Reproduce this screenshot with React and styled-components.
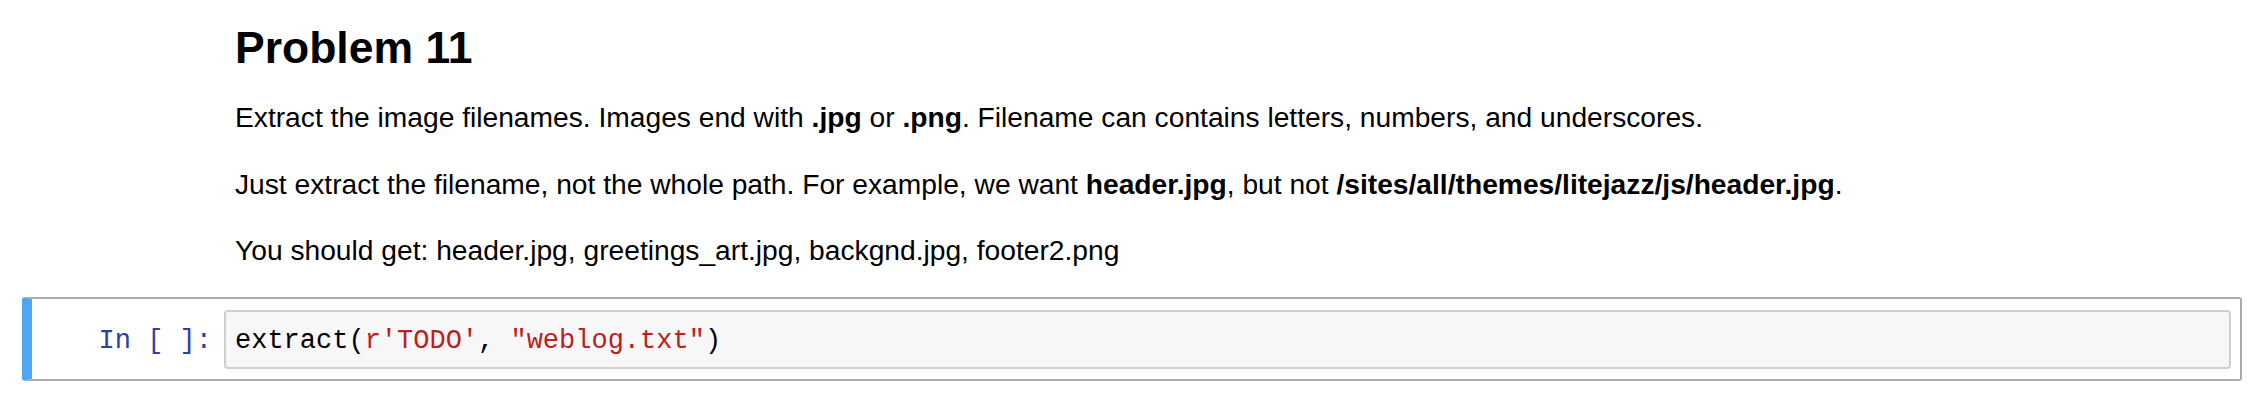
import React from 'react'
import styled, { createGlobalStyle } from 'styled-components';

const GlobalStyle = createGlobalStyle`
body {
    margin: 0;
    background: #fff;
    font-family: "Liberation Sans", Arial, sans-serif;
    color: #000;
}
`

const Notebook = styled.div`
width: 2220px;
margin-left: 22px;
padding-top: 25px;
box-sizing: border-box;
`

const MarkdownCell = styled.div`
display: flex;
padding-left: 10px;
`

const CodeCell = styled.div`
display: flex;
margin-top: 27px;
border: 2px solid #ababab;
border-left: 10px solid #4fa6f2;
border-radius: 3px;
padding: 11px 9px 10px 0;
`

const Prompt = styled.div`
width: 192px;
flex-shrink: 0;
box-sizing: border-box;
text-align: right;
padding: ${p => p.code ? '16px 12px 0 0' : '0'};
font-family: "Liberation Mono", "Courier New", monospace;
font-size: 27px;
line-height: 31.6px;
color: #303F9F;
white-space: pre;
`

const Rendered = styled.div`
flex: 1;
padding-left: 11px;
h2 {
    margin: 0 0 28px;
    font-size: 44.5px;
    line-height: 45px;
    font-weight: 700;
}
p {
    margin: 0 0 28px;
    font-size: 28.2px;
    line-height: 38.5px;
}
p:last-child {
    margin-bottom: 0;
}
`

const InputArea = styled.div`
flex: 1;
border: 2px solid #cfcfcf;
border-radius: 4px;
background: #f7f7f7;
padding: 14px 9px 10px;
font-family: "Liberation Mono", "Courier New", monospace;
font-size: 27px;
line-height: 31.6px;
color: #000;
white-space: pre;
`

const Str = styled.span`
color: #BA2121;
`

const App = () => {
    return (
        <>
            <GlobalStyle />
            <Notebook>
                <MarkdownCell>
                    <Prompt />
                    <Rendered>
                        <h2>Problem 11</h2>
                        <p>Extract the image filenames. Images end with <b>.jpg</b> or <b>.png</b>. Filename can contains letters, numbers, and underscores.</p>
                        <p>Just extract the filename, not the whole path. For example, we want <b>header.jpg</b>, but not <b>/sites/all/themes/litejazz/js/header.jpg</b>.</p>
                        <p>You should get: header.jpg, greetings_art.jpg, backgnd.jpg, footer2.png</p>
                    </Rendered>
                </MarkdownCell>
                <CodeCell>
                    <Prompt code>In [ ]:</Prompt>
                    <InputArea>extract(<Str>r'TODO'</Str>, <Str>"weblog.txt"</Str>)</InputArea>
                </CodeCell>
            </Notebook>
        </>
    )
}

export default App
